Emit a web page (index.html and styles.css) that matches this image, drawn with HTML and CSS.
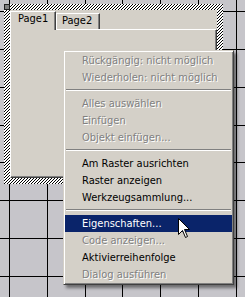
FILE: index.html
```
<!DOCTYPE html>
<html lang="de">
<head>
<meta charset="utf-8">
<title>Dialog-Editor</title>
<link rel="stylesheet" href="styles.css">
</head>
<body>
<div class="desk">
  <svg class="grid" width="245" height="297" viewBox="0 0 245 297" shape-rendering="crispEdges" aria-hidden="true">
    <g fill="#000">
      <rect x="9" y="0" width="1" height="297"/>
      <rect x="47" y="0" width="1" height="297"/>
      <rect x="85" y="0" width="1" height="297"/>
      <rect x="122" y="0" width="1" height="297"/>
      <rect x="160" y="0" width="1" height="297"/>
      <rect x="198" y="0" width="1" height="297"/>
      <rect x="236" y="0" width="1" height="297"/>
      <rect x="0" y="11" width="245" height="1"/>
      <rect x="0" y="49" width="245" height="1"/>
      <rect x="0" y="87" width="245" height="1"/>
      <rect x="0" y="125" width="245" height="1"/>
      <rect x="0" y="162" width="245" height="1"/>
      <rect x="0" y="200" width="245" height="1"/>
      <rect x="0" y="238" width="245" height="1"/>
      <rect x="0" y="276" width="245" height="1"/>
    </g>
  </svg>

  <div class="frame">
    <svg class="hatch" width="219" height="180" shape-rendering="crispEdges" aria-hidden="true">
      <defs>
        <pattern id="hp" width="3" height="3" patternUnits="userSpaceOnUse">
          <rect width="3" height="3" fill="#fff"/>
          <rect x="2" y="0" width="1" height="1" fill="#000"/>
          <rect x="1" y="1" width="1" height="1" fill="#000"/>
          <rect x="0" y="2" width="1" height="1" fill="#000"/>
        </pattern>
      </defs>
      <rect width="219" height="180" fill="url(#hp)"/>
    </svg>
    <span class="handle"></span>
    <div class="form">
      <div class="tabs">
        <div class="tab active">Page1</div>
        <div class="tab">Page2</div>
      </div>
      <div class="page"></div>
    </div>
  </div>

  <div class="menu">
    <div class="item off">Rückgängig: nicht möglich</div>
    <div class="item off">Wiederholen: nicht möglich</div>
    <div class="sep"></div>
    <div class="item off">Alles auswählen</div>
    <div class="item off">Einfügen</div>
    <div class="item off">Objekt einfügen...</div>
    <div class="sep"></div>
    <div class="item">Am Raster ausrichten</div>
    <div class="item">Raster anzeigen</div>
    <div class="item">Werkzeugsammlung...</div>
    <div class="sep"></div>
    <div class="item hot">Eigenschaften...</div>
    <div class="item off">Code anzeigen...</div>
    <div class="item">Aktivierreihenfolge</div>
    <div class="item off">Dialog ausführen</div>
  </div>

  <svg class="cursor" width="13" height="21" viewBox="0 0 13 21" aria-hidden="true">
    <path d="M0.5 0.5 L0.5 16.5 L4.5 12.5 L7.5 19.5 L9.5 18.5 L6.5 11.5 L11.5 11.5 Z" fill="#fff" stroke="#000" stroke-width="1" stroke-linejoin="miter"/>
  </svg>
</div>
</body>
</html>
```

FILE: styles.css
```
* { box-sizing: border-box; }

html, body {
  margin: 0;
  padding: 0;
  width: 245px;
  height: 297px;
  overflow: hidden;
}

body {
  background: #c6c5ca;
  font-family: "DejaVu Sans Condensed", "Liberation Sans", sans-serif;
  font-size: 11px;
  color: #000;
}

.desk {
  position: relative;
  width: 245px;
  height: 297px;
}

.grid {
  position: absolute;
  left: 0;
  top: 0;
  display: block;
}

.frame {
  position: absolute;
  left: 4px;
  top: 4px;
  width: 219px;
  height: 180px;
  padding: 6px;
  display: flex;
}

.hatch {
  position: absolute;
  left: 0;
  top: 0;
  display: block;
}

.handle {
  position: absolute;
  left: 0;
  top: 0;
  width: 6px;
  height: 6px;
  background: #808080;
  border: 1px solid #202020;
}

.form {
  position: relative;
  flex: 1;
  background: #d4d0c8;
  display: flex;
  flex-direction: column;
}

.tabs {
  display: flex;
  align-items: flex-start;
  height: 19px;
}

.tab {
  position: relative;
  height: 16px;
  margin-top: 3px;
  width: 44px;
  padding-left: 5px;
  line-height: 14px;
  background: #d4d0c8;
  border-top: 1px solid #fff;
  border-left: 1px solid #fff;
  border-right: 1px solid #404040;
  box-shadow: inset -1px 0 0 #808080;
}

.tab.active {
  width: 46px;
  height: 19px;
  margin-top: 1px;
  padding-left: 7px;
  z-index: 1;
}

.page {
  flex: 1;
  background: #d4d0c8;
  border-top: 1px solid #fff;
  border-left: 1px solid #fff;
  border-right: 1px solid #404040;
  border-bottom: 1px solid #404040;
  box-shadow: inset -1px -1px 0 #808080;
}

.menu {
  position: absolute;
  left: 63px;
  top: 50px;
  width: 171px;
  padding: 1px 0;
  background: #d4d0c8;
  border: 1px solid;
  border-color: #d4d0c8 #404040 #404040 #d4d0c8;
  box-shadow:
    inset 1px 1px 0 #fff,
    inset -1px -1px 0 #808080,
    3px 3px 3px rgba(0, 0, 0, 0.45);
}

.item {
  height: 17px;
  margin: 0 1px;
  padding-left: 17px;
  line-height: 17px;
  white-space: nowrap;
}

.item.off {
  color: #808080;
  text-shadow: 1px 1px 0 #fff;
}

.item.hot {
  background: #0a246a;
  color: #fff;
}

.sep {
  height: 9px;
  margin: 0 2px;
  padding-top: 3px;
}

.sep::before {
  content: "";
  display: block;
  height: 1px;
  background: #808080;
  border-bottom: 1px solid #fff;
  box-sizing: content-box;
}

.cursor {
  position: absolute;
  left: 178px;
  top: 218px;
  display: block;
}
```
